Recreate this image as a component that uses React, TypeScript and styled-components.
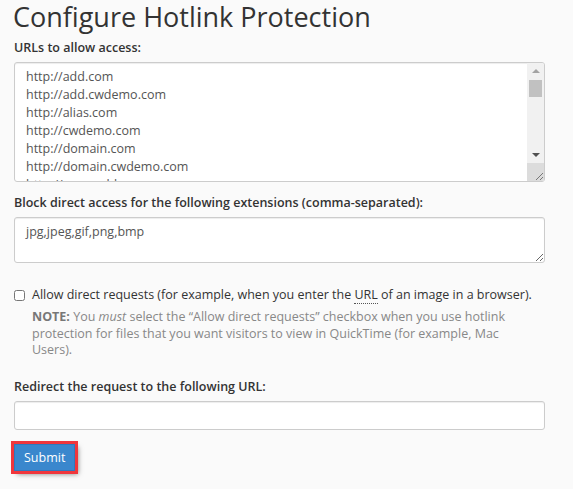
import * as React from "react";
import styled, { createGlobalStyle } from "styled-components";

const GlobalStyle = createGlobalStyle`
  body {
    margin: 0;
    background: #fafafa;
    font-family: "Open Sans", "Liberation Sans", sans-serif;
    font-size: 12.5px;
    color: #333;
  }
`;

const Page = styled.div`
  width: 531px;
  padding: 0 0 12px 14px;
`;

const Title = styled.h1`
  margin: 0 0 0 -1px;
  font-size: 27px;
  font-weight: 400;
  line-height: 34px;
  color: #333;
`;

const Group = styled.div<{ $top: number }>`
  display: flex;
  flex-direction: column;
  margin-top: ${p => p.$top}px;
`;

const Label = styled.label`
  font-size: 12.5px;
  font-weight: 600;
  line-height: 18px;
  margin-bottom: 5px;
`;

const fieldLook = `
  box-sizing: border-box;
  border: 1px solid #ccc;
  border-radius: 3px;
  background: #fff;
  box-shadow: inset 0 1px 1px rgba(0, 0, 0, 0.075);
`;

const ListFrame = styled.div`
  ${fieldLook}
  display: flex;
  height: 120px;
  overflow: hidden;
`;

const ListArea = styled.textarea`
  flex: 1;
  min-width: 0;
  margin: 0;
  padding: 5px 11px;
  border: none;
  outline: none;
  background: transparent;
  font-family: inherit;
  font-size: 12.5px;
  line-height: 18px;
  color: #555;
  resize: none;
  overflow: hidden;
`;

const Rail = styled.div`
  display: flex;
  flex-direction: column;
  width: 17px;
  flex: none;
  background: #f1f1f1;
`;

const ArrowButton = styled.div<{ $down?: boolean }>`
  display: flex;
  align-items: center;
  justify-content: center;
  height: 17px;
  flex: none;

  &::before {
    content: "";
    width: 0;
    height: 0;
    border-left: 4px solid transparent;
    border-right: 4px solid transparent;
    ${p =>
      p.$down
        ? "border-top: 4px solid #505050; margin-top: 1px;"
        : "border-bottom: 4px solid #a3a3a3; margin-bottom: 1px;"}
  }
`;

const Track = styled.div`
  flex: 1;
  display: flex;
  flex-direction: column;
`;

const Thumb = styled.div`
  height: 17px;
  margin: 0 2px;
  background: #c1c1c1;
`;

const Corner = styled.div`
  display: flex;
  align-items: flex-end;
  justify-content: flex-end;
  height: 18px;
  flex: none;
  background: #dcdcdc;
`;

const Field = styled.textarea`
  ${fieldLook}
  width: 100%;
  height: 46px;
  padding: 5px 11px;
  font-family: inherit;
  font-size: 12.5px;
  line-height: 18px;
  color: #555;
  resize: vertical;
`;

const TextInput = styled.input`
  ${fieldLook}
  width: 100%;
  height: 29px;
  padding: 5px 11px;
  font-family: inherit;
  font-size: 12.5px;
  color: #555;
`;

const CheckRow = styled.label`
  display: flex;
  align-items: center;
  gap: 7px;
  line-height: 18px;
  font-size: 12.5px;
  color: #333;
`;

const Box = styled.input`
  width: 11px;
  height: 11px;
  margin: 0;
  flex: none;
`;

const Abbr = styled.abbr`
  text-decoration: none;
  border-bottom: 1px dotted #555;
  cursor: help;
`;

const Note = styled.p`
  max-width: 482px;
  margin: 5px 0 0 18px;
  font-size: 12.5px;
  line-height: 16.5px;
  color: #888;

  strong {
    color: #777;
    font-weight: 700;
  }
`;

const Submit = styled.button`
  margin: 11px 0 0 0;
  padding: 4px 9px;
  font-family: inherit;
  font-size: 12.5px;
  line-height: 17px;
  color: #fff;
  background: #3a87cd;
  border: 1px solid #3079bd;
  border-radius: 0;
  outline: 3px solid #f0363c;
  box-shadow: 3px 3px 5px rgba(0, 0, 0, 0.5);
  cursor: pointer;
`;

const SubmitRow = styled.div`
  padding-top: 3px;
`;

const urls = [
  "add.com",
  "add.cwdemo.com",
  "alias.com",
  "cwdemo.com",
  "domain.com",
  "domain.cwdemo.com",
  "www.add.com",
  "www.add.cwdemo.com",
  "www.alias.com",
  "www.cwdemo.com",
  "www.domain.com",
  "www.domain.cwdemo.com",
  "https://add.com",
  "https://add.cwdemo.com",
  "https://alias.com",
  "https://cwdemo.com",
  "https://domain.com",
  "https://domain.cwdemo.com",
  "https://www.add.com",
  "https://www.add.cwdemo.com",
  "https://www.alias.com",
  "https://www.cwdemo.com",
  "https://www.domain.com",
  "https://www.domain.cwdemo.com"
].map(u => (u.startsWith("https://") ? u : "http://" + u));

function Grip() {
  return (
    <svg width="10" height="10" viewBox="0 0 10 10" aria-hidden="true">
      <path d="M2 9 L9 2 M6 9 L9 6" stroke="#777" strokeWidth="1" fill="none" />
    </svg>
  );
}

export default function App() {
  return (
    <>
      <GlobalStyle />
      <Page>
        <Title>Configure Hotlink Protection</Title>

        <Group $top={5}>
          <Label htmlFor="urls">URLs to allow access:</Label>
          <ListFrame>
            <ListArea id="urls" defaultValue={urls.join("\n")} />
            <Rail>
              <ArrowButton />
              <Track>
                <Thumb />
              </Track>
              <ArrowButton $down />
              <Corner>
                <Grip />
              </Corner>
            </Rail>
          </ListFrame>
        </Group>

        <Group $top={12}>
          <Label htmlFor="ext">
            Block direct access for the following extensions (comma-separated):
          </Label>
          <Field id="ext" defaultValue="jpg,jpeg,gif,png,bmp" />
        </Group>

        <Group $top={23}>
          <CheckRow>
            <Box type="checkbox" />
            <span>
              Allow direct requests (for example, when you enter the{" "}
              <Abbr title="Uniform Resource Locator">URL</Abbr> of an image in a
              browser).
            </span>
          </CheckRow>
          <Note>
            <strong>NOTE:</strong> You <em>must</em> select the “Allow direct
            requests” checkbox when you use hotlink protection for files that you
            want visitors to view in QuickTime (for example, Mac Users).
          </Note>
        </Group>

        <Group $top={19}>
          <Label htmlFor="redirect">Redirect the request to the following URL:</Label>
          <TextInput id="redirect" type="text" />
        </Group>

        <SubmitRow>
          <Submit type="submit">Submit</Submit>
        </SubmitRow>
      </Page>
    </>
  );
}
